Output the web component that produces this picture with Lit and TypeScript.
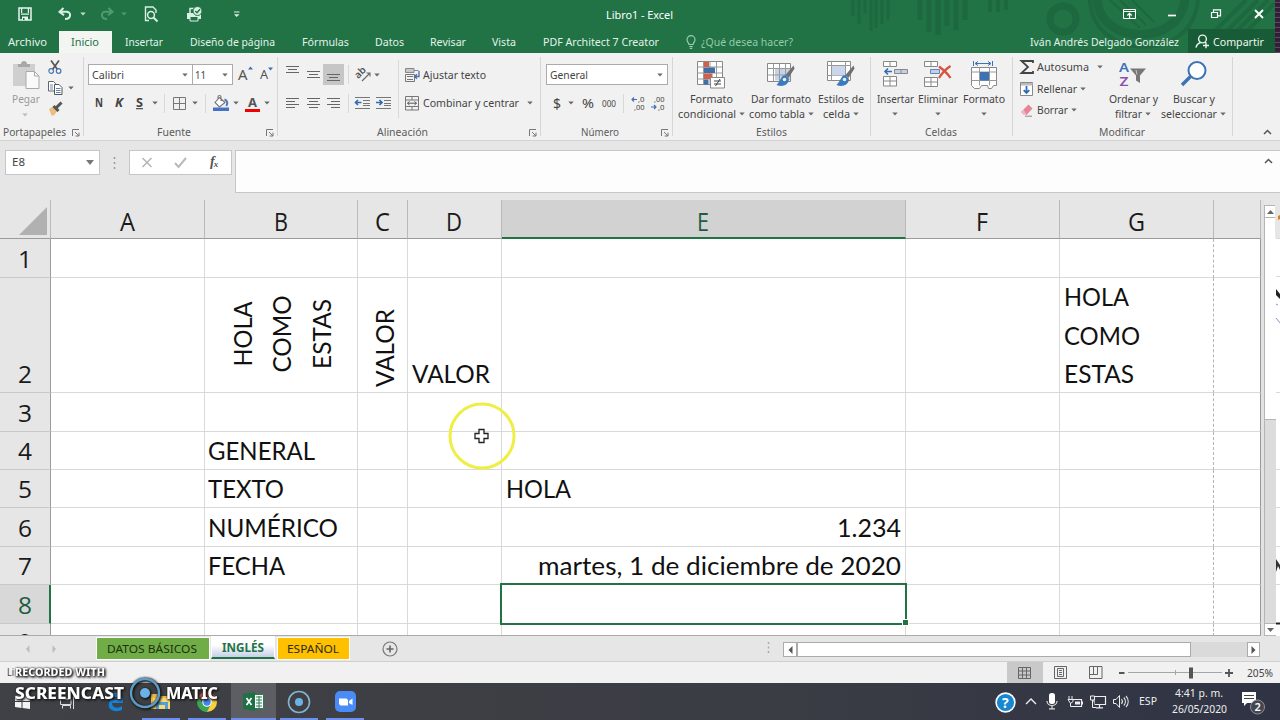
import { LitElement, html, svg, css } from "lit";
import { customElement } from "lit/decorators.js";

const UI = "'Noto Sans','Open Sans',sans-serif";
const HEAD = "'Open Sans','Noto Sans',sans-serif";
const CELL = "Lato,'Open Sans',sans-serif";

/* One line of text set to an exact advance width, caps centred vertically. */
const t = (text: string, w: number, size = 11.5, cls = "", font = UI) => {
  const h = Math.ceil(size * 1.2);
  return html`<svg class="t ${cls}" width=${w} height=${h} viewBox="0 0 ${w} ${h}">
    <text x="0" y=${h / 2 + size * 0.357} textLength=${w} lengthAdjust="spacingAndGlyphs" font-size=${size} font-family=${font}>${text}</text>
  </svg>`;
};
const c = (text: string, w: number, cls = "") => t(text, w, 24.5, "cell-text " + cls, CELL);
const ic = (w: number, h: number, body: unknown, cls = "") =>
  html`<svg class="ic ${cls}" width=${w} height=${h} viewBox="0 0 ${w} ${h}" fill="none">${body}</svg>`;
const arr = (cls = "") => ic(6, 4, svg`<path d="M.3 .5h5.4L3 3.6z" fill="currentColor"/>`, "arr " + cls);
const sep = (cls = "") => html`<i class="sep ${cls}"></i>`;
const lines = (rows: number[][], h: number) =>
  ic(14, h, svg`${rows.map(([y, a, b]) => svg`<path d="M${a} ${y + 0.5}H${b}" stroke="#666"/>`)}`);

const launcher = ic(8, 8, svg`<path d="M.5 7V.5H7M3 3l4 4M7 3.6V7H3.6" stroke="#777"/>`, "launch");
const save = ic(14, 14, svg`<path d="M1 1h12v12H1z" stroke="#e9f5ee" stroke-width="1.5"/><path d="M3 7.2h8M3.6 1v5M10.4 1v5" stroke="#e9f5ee" stroke-width="1.2"/><path d="M4 9.500h6V13H4z" fill="#e9f5ee"/><path d="M5 11h1.500v2H5z" fill="#217346"/>`);
const undo = ic(14, 14, svg`<path d="M5.500 1L1.500 4.800l4.500 3.500M2 4.800h6.500c5 0 5 7.200-1.500 7.200" stroke="#d9efe2" stroke-width="2"/>`);
const redo = ic(14, 14, svg`<path d="M8.500 1l4 3.800L8 8.300M12 4.800H5.500c-5 0-5 7.200 1.500 7.200" stroke="#4f9a72" stroke-width="2"/>`);
const preview = ic(14, 16, svg`<path d="M5 14.500H1.500V1H9l3 3v3" stroke="#d9efe2" stroke-width="1.4"/><circle cx="7" cy="9" r="3.400" stroke="#d9efe2" stroke-width="1.500"/><path d="M9.500 11.500l4 4" stroke="#d9efe2" stroke-width="2"/>`);
const printer = ic(17, 16, svg`<path d="M1 7h14v6H1z" fill="#d9efe2"/><path d="M4 7V2.500h5" stroke="#d9efe2" stroke-width="1.500"/><path d="M4 10.500h8v4.500H4z" fill="#217346" stroke="#d9efe2"/><circle cx="11.500" cy="5" r="4.500" fill="#d9efe2" stroke="#217346"/><path d="M9.300 5l1.700 1.800 3-3.600" stroke="#217346" stroke-width="1.400"/>`);
const custom = ic(8, 7, svg`<path d="M1 1h5.500" stroke="#e0f0e6"/><path d="M1 3.300h5.500L3.700 6z" fill="#e0f0e6"/>`);
const bulb = ic(10, 14, svg`<path d="M3 9.500C3 8 1 7 1 4.700a4 4 0 018 0C9 7 7 8 7 9.500zM3.200 11.500h3.600M3.800 13.300h2.400" stroke="#9bccb0" stroke-width="1.200"/>`);
const person = ic(15, 15, svg`<circle cx="7.500" cy="5" r="3.900" stroke="#e9f5ee" stroke-width="1.400"/><path d="M5.500 8.500C3 9.500 1.500 11 1 13.600M10 8l1 1M8 11.500h6M11 8.700v5.600" stroke="#e9f5ee" stroke-width="1.400"/>`);

const paste = ic(30, 29, svg`<path d="M1 4h22v22H1z" fill="#cfcfcf"/><path d="M6 4h3c0-4 6-4 6 0h3v3H6z" fill="#a8a8a8"/><path d="M14 11.500h8.500l4.500 4.500v12.500H14z" fill="#fafafa" stroke="#a9a9a9"/><path d="M22.500 11.500V16H27" stroke="#a9a9a9"/>`);
const cut = ic(14, 14, svg`<path d="M3 .5l6.500 9M11 .5l-6.500 9" stroke="#555" stroke-width="1.700"/><circle cx="3.200" cy="11" r="2.300" stroke="#4a77b4" stroke-width="1.200"/><circle cx="10.600" cy="11" r="2.300" stroke="#4a77b4" stroke-width="1.200"/>`);
const copy = ic(15, 14, svg`<path d="M.5 .5h5l2 2V10h-7z" fill="#fff" stroke="#666"/><path d="M2 4h3M2 6h3M2 8h3" stroke="#6b8fc4"/><path d="M6.500 3.500H11l3 3v7H6.500z" fill="#fff" stroke="#555"/><path d="M8 7.500h4.500M8 9.500h4.500M8 11.500h4.500" stroke="#5a83bd"/>`);
const brush = ic(15, 15, svg`<path d="M1 8l5-3 4 4-4 5.500H3.500z" fill="#eabf7d"/><path d="M5.500 5l5 5M7.800 7.200L13.500 1.500" stroke="#555" stroke-width="3"/>`);

const growA = (s: number, up: boolean) =>
  html`<span class="glyph-a">${t("A", s * 0.68, s, "gray", UI)}${ic(5, 4, up ? svg`<path d="M0 3.500L2.500 .5 5 3.500z" fill="#3e6db5"/>` : svg`<path d="M0 .5L2.500 3.500 5 .5z" fill="#3e6db5"/>`)}</span>`;
const borders = ic(13, 13, svg`<path d="M.5 .5h12v12H.5zM6.500 .5v12M.5 6.500h12" stroke="#777"/>`);
const bucket = ic(16, 16, svg`<path d="M6.500 2.500l5.500 5-5.500 4.500-4.500-4.500zM5 4.500V2c0-2 3-2 3 0v4" fill="#fff" stroke="#777" stroke-width="1.100"/><path d="M11.500 4.500c3 .8 3.500 4 1.800 6.500" stroke="#4a77b4" stroke-width="2"/><path d="M0 12.500h16V16H0z" fill="#4472c4"/>`);
const fontColor = html`<span class="font-color">${t("A", 9, 13, "gray bold", UI)}<i></i></span>`;
const orient = ic(15, 15, svg`<text x="0" y="9" font-size="10" font-weight="600" fill="#555" font-family=${UI} transform="rotate(-45 5 8)">ab</text><path d="M6 14l8-8M10.500 6H14v3.500" stroke="#666" stroke-width="1.100"/>`);
const wrap = ic(15, 16, svg`<path d="M.5 1.500h8.500v4H.5z" fill="#c8c8c8" stroke="#888"/><path d="M9 3.500h4.500" stroke="#888"/><path d="M.5 7.500h9v7h-9zM2 9.500h6M2 12.500h6" stroke="#777"/><path d="M14 4v5.500h-4M12 7.200L9.500 9.500l2.500 2.300" stroke="#4a6fb0" stroke-width="1.300"/>`);
const merge = ic(14, 15, svg`<path d="M.5 .5h13v13.500H.5zM.5 4h13M.5 10.500h13M7 .5V4M7 10.500V14" stroke="#777"/><path d="M2.500 7.200h9M4.500 5.500L2.500 7.200l2 1.800M9.500 5.500l2 1.700-2 1.800" stroke="#555"/>`);
const indent = (right: boolean) =>
  ic(15, 12, svg`<path d="M0 .5h15M8 3.500h7M8 6.500h7M8 8.500h7M0 11.500h15" stroke="#777"/><path d=${right ? "M0 5.500h6M3.500 3L6 5.500 3.500 8" : "M6.500 5.500h-6M3 3L.5 5.500 3 8"} stroke="#2f6db3" stroke-width="1.700"/>`);
const decimals = (inc: boolean) =>
  ic(14, 15, svg`<text x=${inc ? 7 : 3} y="6" font-size="7.500" fill="#444" font-family=${UI} textLength=${inc ? 6.5 : 10.5} lengthAdjust="spacingAndGlyphs">${inc ? ",0" : ",00"}</text><text x=${inc ? 3 : 7} y="14.300" font-size="7.500" fill="#444" font-family=${UI} textLength=${inc ? 10.5 : 6.5} lengthAdjust="spacingAndGlyphs">${inc ? ",00" : ",0"}</text><path d=${inc ? "M6 3.500H1M3 1.500l-2 2 2 2" : "M0 11h5M3 9l2 2-2 2"} stroke="#3f6fb5" stroke-width="1.200"/>`);

const condFmt = ic(30, 28, svg`<path d="M1.500 .5h25v23h-25z" fill="#fff" stroke="#888"/><path d="M7.500 .5v23M20.500 .5v23M1.500 6h25M1.500 12h25M1.500 18h25M14 .5v23" stroke="#999"/><path d="M8 1h5v5H8zM8 12.500h8.500V18H8z" fill="#d0604a"/><path d="M8 6.500h11V12H8zM8 18.500h4.500v5H8z" fill="#3f6fa8"/><path d="M14.500 16.500h14v10.500h-14z" fill="#fff" stroke="#888"/><path d="M18 20h7M18 23h7M24 18l-4.500 7" stroke="#444"/>`);
const brushShape = svg`<path d="M27.500 4.500l-8 9.500 3 3 6-9.500z" fill="#707070"/><path d="M20 14.500c-5-1-4 4-9.500 9.500 5 2 12 1 12.500-6z" fill="#3b7bbd"/><circle cx="18.500" cy="18.500" r="1.800" fill="#e7f0f8"/>`;
const tableFmt = ic(30, 28, svg`<path d="M1.500 2.500h23v18h-23z" fill="#fff" stroke="#888"/><path d="M9 7.500h15v12H9z" fill="#c6d2e6"/><path d="M7.500 2.500v18M13.500 2.500v18M19.500 2.500v18M1.500 7.500h23M1.500 14h23" stroke="#999"/>${brushShape}`);
const cellSty = ic(30, 28, svg`<path d="M1.500 .5h23v19h-23z" fill="#fff" stroke="#888"/><path d="M5.500 .5v19M19.500 .5v19M1.500 4.500h23M1.500 14.500h23" stroke="#999"/><path d="M6 5h13v9.500H6z" fill="#cbd6ea"/>${brushShape}`);
const insertIc = ic(28, 28, svg`<path d="M2.500 .5h13v5h-13zM9 .5v5M2.500 15.500h13v9.500h-13zM9 15.500V25M2.500 20h13" fill="#fff" stroke="#888"/><path d="M13.500 8.500h13v4h-13zM20 8.500v4" fill="#c3d0e6" stroke="#888"/><path d="M11 10.500H4M7 7.500l-3 3 3 3" stroke="#2f6db3" stroke-width="1.600"/>`);
const deleteIc = ic(30, 28, svg`<path d="M1.500 .5h13v5h-13zM8 .5v5M1.500 16.500h13v9h-13zM8 16.500v9M1.500 21h13" fill="#fff" stroke="#888"/><path d="M7.500 8.500h9v4h-9z" fill="#c3d0e6" stroke="#5f86ba"/><path d="M16 5.500c4 3 8 6 11.500 11.500M27.500 5C23 8 19 12 16 17" stroke="#d8523d" stroke-width="2.200"/>`);
const formatIc = ic(28, 30, svg`<path d="M1.500 6.500h25v18h-3l-2 3h-3l-1-3h-6l-2 3h-5l-3-3z" fill="#fff" stroke="#888"/><path d="M9.500 6.500v18M19.500 6.500v18M1.500 11h25M1.500 19.500h25" stroke="#999"/><path d="M10 11h9v8.500h-9z" fill="#3b73b5"/><path d="M3.500 0v5M22.500 0v5M6 2.500h14M8 .5l-3 2 3 2M18 .5l3 2-3 2" stroke="#3b73b5"/>`);
const sortIc = ic(30, 28, svg`<text x="1" y="10.500" font-size="13" font-weight="600" fill="#3b73b5" font-family=${UI} textLength="10" lengthAdjust="spacingAndGlyphs">A</text><text x="1.500" y="24.500" font-size="13" font-weight="600" fill="#8a4db0" font-family=${UI} textLength="9" lengthAdjust="spacingAndGlyphs">Z</text><path d="M12 7.500h16l-6 7V22l-4-2.500v-5z" fill="#777"/><path d="M18 9l1 4.500" stroke="#ccc"/>`);
const findIc = ic(28, 28, svg`<circle cx="17" cy="9.500" r="8.500" fill="#fff" stroke="#3b73b5" stroke-width="2"/><path d="M10.500 15.500L2 24" stroke="#3b73b5" stroke-width="3.400"/>`);
const sigma = ic(14, 14, svg`<path d="M13 3V1H1.500L8 7l-6.500 6H13v-2" stroke="#444" stroke-width="1.800"/>`);
const fill = ic(14, 14, svg`<path d="M.5 .5h12v13H.5z" fill="#fff" stroke="#888"/><path d="M1 1h11.500v2.500H1z" fill="#bbb"/><path d="M6.500 4v7M3.700 8.200L6.500 11l2.800-2.800" stroke="#2f6db3" stroke-width="1.800"/>`);
const erase = ic(14, 13, svg`<path d="M8.500 .5l4 4-6 6.500H4L1 8z" fill="#e8849a"/><path d="M1 8l3 3 2.500 0L3.500 5.500z" fill="#f4b7c3"/><path d="M5 12.200h7" stroke="#888"/>`);

const big = (icon: unknown, l1: unknown, l2: unknown, cls = "") =>
  html`<div class="big ${cls}"><div class="big-ic">${icon}</div><div class="l1">${l1}</div><div class="l2">${l2}</div></div>`;

const ROWS: Record<string, unknown>[] = [
  {},
  {
    B: html`<div class="vert">${[["HOLA", 65], ["COMO", 77], ["ESTAS", 70]].map(([s, w]) => html`<span>${c(s as string, w as number, "rot")}</span>`)}</div>`,
    C: html`<div class="vert low"><span>${c("VALOR", 78, "rot")}</span></div>`,
    D: c("VALOR", 78),
    G: html`<div class="stack">${c("HOLA", 65)}${c("COMO", 76)}${c("ESTAS", 70)}</div>`,
  },
  {},
  { B: c("GENERAL", 107) },
  { B: c("TEXTO", 76), E: c("HOLA", 65) },
  { B: c("NUMÉRICO", 130), E: c("1.234", 64, "right") },
  { B: c("FECHA", 77), E: c("martes, 1 de diciembre de 2020", 363, "right") },
  { E: html`<div class="select"><i></i></div>` },
  {},
];

@customElement("app-root")
export class AppRoot extends LitElement {
  static styles = css`
    :host { display: block; width: 1280px; height: 720px; overflow: hidden; position: relative; background: #e6e6e6; color: #444; font-family: "Noto Sans", sans-serif; }
    * { box-sizing: border-box; }
    svg { display: block; overflow: visible; flex: none; }
    .t text { fill: currentColor; }
    .bold text { font-weight: 700; }
    .ital text { font-style: italic; }
    .under text { text-decoration: underline; }
    .arr { color: #6a6a6a; }
    .gray { color: #555; }
    .row { display: grid; align-items: center; justify-items: start; }
    .sep { display: block; width: 1px; height: 19px; background: #d8d8d8; }
    .sep.tall { height: 29px; margin: -4px 0; }

    .head { height: 53px; display: grid; grid-template-columns: 1275px 5px; background: #217346; color: #fff; }
    .head > * { grid-row: 1; }
    .head .decor { grid-column: 1; overflow: hidden; }
    .bars { grid-column: 1; display: flex; flex-direction: column; z-index: 1; }
    .title { height: 29px; display: grid; grid-template-columns: 605.500px 517.500px 152px; align-items: center; }
    .quick { padding-left: 18px; grid-template-columns: 40px 22px 20px 21px 23px 42px 47px 10px; margin-top: -1px; }
    .quick .arr { color: #bfe0cc; }
    .quick .off { color: #4f9a72; }
    .wins { grid-template-columns: 44px 43px 43px 20px; margin-top: -1px; }
    .tabs { height: 24px; padding-left: 8px; grid-template-columns: 51px 66px 65px 112px 73px 55px 62px 51px 143px 15px 329px 158px 87px; color: #e4f2ea; }
    .tabs > .t, .tabs > .ic { margin-top: 1px; }
    .tab-on { width: 53px; height: 22px; align-self: end; background: #f3f5f3; color: #217346; display: flex; align-items: center; justify-content: center; padding-right: 2px; }
    .ask { color: #97c8ac; }
    .share { width: 87px; height: 24px; align-self: start; background: #185c37; display: flex; align-items: center; gap: 3px; padding: 1px 0 0 7px; color: #f0f8f3; }
    .edge { grid-column: 2; background: repeating-linear-gradient(#3d1d3a 0 2px, #5d4766 2px 3px, #2a2232 3px 5px); }

    .ribbon { height: 88px; display: flex; background: #f1f1f1; border-bottom: 1px solid #d2d2d2; }
    .group { display: flex; flex-direction: column; position: relative; }
    .group::after { content: ""; position: absolute; right: 0; top: 4px; height: 79px; width: 1px; background: #d6d6d6; }
    .group:last-child::after { display: none; }
    .body { height: 71px; }
    .name { height: 15px; display: grid; grid-template-columns: 1fr; align-items: center; justify-items: center; color: #5c5c5c; }
    .name > * { grid-area: 1 / 1; }
    .g5 .name, .g6 .name, .g7 .name { padding-right: 2px; }
    .with-launch .t { margin-right: 15px; }
    .launch { justify-self: end; margin-right: 4px; margin-top: 3px; }
    .g1 { width: 84px; } .g2 { width: 194px; } .g3 { width: 263px; } .g4 { width: 132px; } .g5 { width: 198px; } .g6 { width: 142px; } .g7 { width: 220px; } .g8 { width: 47px; }
    .clip { display: grid; grid-template-columns: 48px 36px; }
    .paste { display: flex; flex-direction: column; padding: 7px 0 0 12px; color: #9a9a9a; }
    .paste .arr { color: #bbb; margin: 7px 0 0 10px; }
    .paste .t { margin-top: 3px; }
    .tools { display: grid; grid-template-rows: 21px 21px 21px; padding-top: 3px; align-items: center; }
    .tools > div { display: flex; align-items: center; gap: 5px; }
    .two { display: grid; grid-template-rows: 21px 22px; row-gap: 7px; padding-top: 11px; align-content: start; }
    .f1 { padding-left: 4px; grid-template-columns: 104px 46px 22px 18px; }
    .f2 { padding-left: 11px; grid-template-columns: 20px 21px 16px 12px 9px 19px 13px 8px 20px 12px 19px 6px; }
    .combo { height: 21px; background: #fff; border: 1px solid #ababab; display: flex; align-items: center; justify-content: space-between; padding: 0 4px 0 3px; }
    .c-font { width: 105px; } .c-size { width: 41px; } .c-num { width: 122px; margin-left: 5px; }
    .c-size { padding-left: 2px; }
    .glyph-a { display: flex; align-items: flex-start; }
    .font-color { display: flex; flex-direction: column; align-items: center; width: 15px; }
    .font-color .t { margin-bottom: -1px; }
    .font-color i { width: 15px; height: 3px; background: #f00000; }
    .a1 { padding-left: 8px; grid-template-columns: 21px 20px 21px 8px 18px 24px 7px 18px 70px; }
    .a2 { padding-left: 8px; grid-template-columns: 21px 20px 21px 7px 21px 22px 7px 18px 104px 6px; }
    .pressed { width: 21px; height: 21px; background: #c6c6c6; display: flex; align-items: flex-end; padding: 0 0 3px 4px; margin-left: -4px; }
    .up { align-self: start; margin-top: 2px; }
    .n2 { padding-left: 12px; grid-template-columns: 15px 14px 20px 21px 8px 20px 14px; }
    .bigs { display: flex; }
    .s5 { padding-left: 3px; } .s6 { padding-left: 3px; }
    .big { display: flex; flex-direction: column; align-items: center; padding-top: 8px; }
    .big-ic { height: 30.500px; }
    .l1 { height: 15px; display: flex; align-items: center; }
    .l2 { height: 14px; display: flex; align-items: center; gap: 3px; }
    .w69 { width: 70px; } .w70 { width: 70px; } .w50 { width: 50px; } .w42 { width: 42px; } .w44 { width: 44px; } .w46 { width: 47px; } .w58 { width: 58px; } .w62 { width: 63px; }
    .edit { width: 91px; padding: 3px 0 0 7px; display: grid; grid-template-rows: 22px 21.500px 21px; align-content: start; }
    .edit > div { display: flex; align-items: center; gap: 3px; }
    .edit .far { margin-left: 5px; }
    .fold { margin: 0 0 0 21px; }

    .formula { height: 59px; display: grid; grid-template-columns: 114px 15px 106px 1045px; align-items: start; padding-top: 9px; }
    .namebox { margin-left: 5px; width: 95px; height: 25px; border: 1px solid #c6c6c6; background: #fff; display: flex; align-items: center; justify-content: space-between; padding: 0 5px 1px 6px; }
    .dots { margin-top: 7px; }
    .fx { width: 103px; height: 25px; border: 1px solid #c6c6c6; background: #fff; grid-template-columns: 33px 34px 20px; padding: 0 0 1px 11px; }
    .input { height: 43px; border: 1px solid #c6c6c6; border-right: 0; background: #fdfdfd; display: flex; justify-content: flex-end; padding: 7px 7px 0 0; }

    .work { height: 436px; display: grid; grid-template-columns: 1261px 3px 12px 4px; }
    .sheet { display: grid; grid-template-columns: 51px 154px 153px 50px 94px 404px 154px 154px 47px; grid-template-rows: 39px 39px 115px 39px 38px 38px 39px 38px 39px 12px; overflow: hidden; border-bottom: 1px solid #ababab; }
    .ch, .rh { display: flex; align-items: center; justify-content: center; background: #e6e6e6; color: #1a1a1a; }
    .ch { border-right: 1px solid #b9b9b9; border-bottom: 1px solid #9b9b9b; padding: 6px 1px 0 0; }
    .rh { border-right: 1px solid #9b9b9b; border-bottom: 1px solid #c9c9c9; align-items: flex-end; overflow: hidden; padding-bottom: 3px; }
    .rh.tip { align-items: flex-start; padding: 3px 0 0; border-bottom: 0; }
    .ch.on { background: #d2d2d2; color: #215c41; border-bottom: 2px solid #217346; }
    .rh.on { background: #d8d8d8; color: #215c41; border-right: 2px solid #217346; }
    .corner { justify-content: flex-end; align-items: flex-end; padding: 0 3px 3px 0; }
    .cell { background: #fff; border-right: 1px solid #d9d9d9; border-bottom: 1px solid #d9d9d9; display: flex; align-items: flex-end; position: relative; padding: 0 4px 2.750px 3px; color: #111; }
    .cell.E { justify-content: flex-end; }
    .cell.E .cell-text:not(.right) { margin-right: auto; }
    .cell.G { border-right: 1px dashed #b5b5b5; padding-left: 3.500px; }
    .cell.D, .cell.E { padding-left: 3.500px; }
    .cell.H { border-right-color: #999; }
    .stack { display: grid; grid-auto-rows: 38.500px; align-items: end; }
    .vert { display: flex; width: 100%; height: 100%; justify-content: center; align-items: center; padding-left: 4px; }
    .vert span { width: 39px; display: flex; justify-content: center; align-items: center; }
    .vert.low { align-items: flex-end; padding: 0 0 26px 5px; }
    .rot { transform: rotate(-90deg); }
    .select { position: absolute; inset: -2px -2px -2px -2px; border: 2px solid #217346; z-index: 2; }
    .select i { position: absolute; right: -4px; bottom: -3px; width: 7px; height: 7px; background: #217346; border: 1px solid #fff; }
    .cell.sel { z-index: 2; }
    .gutter { background: #e2e2e2; }
    .vs { display: flex; flex-direction: column; background: #dcdcdc; border-left: 1px solid #b5b5b5; margin-top: 5px; }
    .vs .btn { height: 13px; background: #fff; border: solid #b5b5b5; border-width: 1px 0; display: flex; align-items: center; justify-content: center; }
    .vs .thumb { height: 202px; background: #fff; border-bottom: 1px solid #b5b5b5; }
    .vs .track { flex: 1; }
    .sliver { background: #fff; padding-top: 12px; }

    .sheettabs { height: 26px; display: grid; grid-template-columns: 96px 115px 66px 105px 383px 18px 477px 20px; background: #e6e6e6; border-bottom: 1px solid #cfcfcf; align-items: start; }
    .nav { display: flex; gap: 22px; padding: 9px 0 0 25px; }
    .tab { margin-top: 1px; height: 23px; display: flex; align-items: center; justify-content: center; color: #2b2b1c; border: 1px solid #fff; padding-right: 2px; }
    .green { width: 114px; background: #70ad47; color: #1d3010; }
    .white { width: 64px; margin-top: 0; background: linear-gradient(#fff 40%, #c5cfe6); color: #217346; border-bottom: 2px solid #217346; padding: 2px 0 0; }
    .yellow { width: 73px; background: #ffc000; }
    .plus { margin-top: 5px; }
    .hs { margin-top: 6px; height: 15px; display: grid; grid-template-columns: 14px 394px 56px 13px; background: #dadada; }
    .hs > * { background: #fff; border: 1px solid #ababab; display: flex; align-items: center; justify-content: center; }
    .hs .gap { background: none; border: 0; }

    .status { height: 21px; background: #f1f1f1; display: grid; grid-template-columns: 1007px 47px 35px 29px 129px 33px; align-items: center; padding-bottom: 1px; }
    .status .mode { margin-left: 7px; }
    .view-on { width: 36px; height: 21px; background: #c9c9c9; display: flex; align-items: center; justify-content: center; padding-right: 1px; }
    .task { height: 37px; background: linear-gradient(90deg, #3f4146, #3b3d44 60%, #2f3344); display: grid; grid-template-columns: 995px 285px; color: #eee; }
    .apps { display: grid; grid-template-columns: 44px 48px 46px 46px 46px 46px 46px 46px; height: 37px; }
    .app { display: flex; align-items: center; justify-content: center; border-bottom: 2px solid transparent; padding-top: 2px; }
    .run { border-bottom-color: #6f8fee; margin: 0 4px; }
    .run.act { background: #5d5e63; margin: 0 0 0 1px; }
    .tray { grid-template-columns: 31px 20px 22px 22px 23px 26px 32px 71px 30px; height: 37px; }
    .clock { display: flex; flex-direction: column; align-items: center; gap: 2px; width: 56px; margin-top: -2px; }
    .lang { margin-top: -2px; }

    .mark { position: absolute; left: 15px; top: 665px; color: #fff; filter: drop-shadow(1px 1px 1px #111) drop-shadow(0 0 1px #222); z-index: 5; }
    .mark .brand { display: flex; align-items: center; gap: 7px; margin-top: -1px; }
    .mark .t text { font-weight: 800; }
    .cursor { position: absolute; left: 448px; top: 402px; z-index: 5; }
  `;

  private group(n: number, label: string, w: number, body: unknown, cls = "", launch = false) {
    return html`<section class="group g${n}"><div class="body ${cls}">${body}</div>
      <div class="name ${launch ? "with-launch" : ""}">${t(label, w, 11)}${launch ? launcher : ""}</div></section>`;
  }

  private header() {
    const tabs: [string, number][] = [["Insertar", 38], ["Diseño de página", 85], ["Fórmulas", 47], ["Datos", 29], ["Revisar", 36], ["Vista", 24], ["PDF Architect 7 Creator", 116]];
    return html`<header class="head">
      <svg class="decor" width="1275" height="53" viewBox="0 0 1275 53" fill="none">
        <g stroke="#1d683e">
          <path d="M853 0v16M859 0v24M865 0v14M871 0v31M876 0v28M882 0v24M888 0v20" stroke-width="3"/>
          <path d="M920 0v20M929 0v32M938 0v35M947 0v26M956 0v30M965 0v20" stroke-width="5"/>
          <path d="M990 0v12M998 0v12M1006 0v10" stroke-width="4"/>
          <circle cx="1063" cy="19" r="13" stroke-width="7"/>
          <path d="M1090 0c2 60 102 65 108 0M1220 38l38-38M1230 38l38-38M1240 38l35-35M1212 34l34-34" stroke-width="4"/>
          <path d="M1097 0c4 46 82 46 88 0" stroke-width="9"/>
          <path d="M1110 0l30 28M1120 0l26 25M1132 0l22 22" stroke-width="2"/>
        </g>
      </svg>
      <div class="bars">
        <div class="title">
          <div class="row quick">${save}${undo}${arr()}${redo}${arr("off")}${preview}${printer}${custom}</div>
          ${t("Libro1 - Excel", 67, 11.5)}
          <div class="row wins">
            ${ic(13, 10, svg`<path d="M.5 .5h12v9H.5zM.5 2.500h12" stroke="#fff"/><path d="M6.500 9V4.500M4.300 6.500l2.200-2.200 2.200 2.200" stroke="#fff" stroke-width="1.200"/>`)}
            ${ic(10, 4, svg`<path d="M1 3.500h8" stroke="#fff" stroke-width="1.700"/>`)}
            ${ic(10, 10, svg`<path d="M1.500 3.500h6v5h-6zM3.500 3V.8h7v6H8" stroke="#fff" stroke-width="1.200"/>`)}
            ${ic(11, 10, svg`<path d="M2 1l8 8M10 1l-8 8" stroke="#fff" stroke-width="1.900"/>`)}
          </div>
        </div>
        <nav class="row tabs">
          ${t("Archivo", 39)}<div class="tab-on">${t("Inicio", 28)}</div>
          ${tabs.map(([s, w]) => t(s, w))}
          ${bulb}${t("¿Qué desea hacer?", 92, 11.5, "ask")}${t("Iván Andrés Delgado González", 149)}
          <div class="share">${person}${t("Compartir", 51)}</div>
        </nav>
      </div>
      <div class="edge"></div>
    </header>`;
  }

  private ribbon() {
    return html`<div class="ribbon">
      ${this.group(1, "Portapapeles", 63, html`
        <div class="paste">${paste}${t("Pegar", 28)}${arr()}</div>
        <div class="tools"><div>${cut}</div><div>${copy}${arr()}</div><div>${brush}</div></div>`, "clip", true)}
      ${this.group(2, "Fuente", 34, html`
        <div class="row f1"><div class="combo c-font">${t("Calibri", 32)}${arr()}</div><div class="combo c-size">${t("11", 11)}${arr()}</div>${growA(14, true)}${growA(12, false)}</div>
        <div class="row f2">${t("N", 8, 11.5, "bold")}${t("K", 8, 11.5, "bold ital")}${t("S", 7, 11.5, "bold under")}${arr()}${sep()}${borders}${arr()}${sep()}${bucket}${arr()}${fontColor}${arr()}</div>`, "two", true)}
      ${this.group(3, "Alineación", 51, html`
        <div class="row a1"><div class="up">${lines([[0, 0, 13], [3, 2, 11], [6, 0, 13]], 8)}</div>${lines([[0, 0, 13], [3, 2, 11], [6, 0, 13]], 8)}<div class="pressed">${lines([[0, 0, 13], [3, 2, 11], [6, 0, 13]], 8)}</div>${sep()}${orient}${arr()}${sep("tall")}${wrap}${t("Ajustar texto", 63)}</div>
        <div class="row a2">${lines([[0, 0, 13], [3, 0, 9], [6, 0, 13], [9, 0, 9]], 10)}${lines([[0, 0, 13], [3, 2, 11], [6, 0, 13], [9, 2, 11]], 10)}${lines([[0, 0, 13], [3, 4, 13], [6, 0, 13], [9, 4, 13]], 10)}${sep()}${indent(false)}${indent(true)}${sep("tall")}${merge}${t("Combinar y centrar", 96)}${arr()}</div>`, "two", true)}
      ${this.group(4, "Número", 38, html`
        <div class="combo c-num">${t("General", 38)}${arr()}</div>
        <div class="row n2">${t("$", 8, 14)}${arr()}${t("%", 12, 13)}${t("000", 14, 9)}${sep()}${decimals(true)}${decimals(false)}</div>`, "two", true)}
      ${this.group(5, "Estilos", 31, html`
        ${big(condFmt, t("Formato", 43), html`${t("condicional", 58)}${arr()}`, "w69")}
        ${big(tableFmt, t("Dar formato", 60), html`${t("como tabla", 56)}${arr()}`, "w70")}
        ${big(cellSty, t("Estilos de", 46), html`${t("celda", 27)}${arr()}`, "w50")}`, "bigs s5")}
      ${this.group(6, "Celdas", 32, html`
        ${big(insertIc, t("Insertar", 37), arr(), "w42")}${big(deleteIc, t("Eliminar", 40), arr(), "w44")}${big(formatIc, t("Formato", 42), arr(), "w46")}`, "bigs s6")}
      ${this.group(7, "Modificar", 46, html`
        <div class="edit"><div>${sigma}${t("Autosuma", 52)}${arr("far")}</div><div>${fill}${t("Rellenar", 40)}${arr()}</div><div>${erase}${t("Borrar", 31)}${arr()}</div></div>
        ${big(sortIc, t("Ordenar y", 49), html`${t("filtrar", 27)}${arr()}`, "w58")}
        ${big(findIc, t("Buscar y", 42), html`${t("seleccionar", 56)}${arr()}`, "w62")}`, "bigs")}
      <section class="group g8"><div class="body"></div><div class="name">${ic(9, 6, svg`<path d="M1 5l3.500-3.500L8 5" stroke="#555" stroke-width="1.500"/>`, "fold")}</div></section>
    </div>`;
  }

  private formula() {
    return html`<div class="formula">
      <div class="namebox">${t("E8", 13)}${ic(8, 5, svg`<path d="M0 0h8L4 5z" fill="#777"/>`)}</div>
      ${ic(3, 12, svg`<path d="M.5 0v12" stroke="#999" stroke-dasharray="2 3" stroke-width="1.500"/>`, "dots")}
      <div class="row fx">
        ${ic(12, 11, svg`<path d="M1.500 1l9 9M10.500 1l-9 9" stroke="#b5b5b5" stroke-width="1.500"/>`)}
        ${ic(13, 11, svg`<path d="M1 6l3.500 4L12 1" stroke="#b9b9b9" stroke-width="2"/>`)}
        ${ic(12, 14, svg`<text x="2" y="11" font-size="14" font-style="italic" font-weight="700" font-family="'Liberation Serif',serif" fill="#555">f<tspan font-size="9" dx="-1" dy="1">x</tspan></text>`)}
      </div>
      <div class="input">${ic(9, 6, svg`<path d="M1 5l3.500-3.500L8 5" stroke="#555" stroke-width="1.500"/>`)}</div>
    </div>`;
  }

  private sheet() {
    const cols: [string, number][] = [["A", 15], ["B", 14], ["C", 15], ["D", 16], ["E", 12], ["F", 12], ["G", 17], ["H", 0]];
    return html`<div class="work"><div class="sheet">
      <div class="ch corner">${ic(28, 28, svg`<path d="M28 0v28H0z" fill="#b1b1b1"/>`)}</div>
      ${cols.map(([l, w]) => html`<div class="ch ${l === "E" ? "on" : ""}">${w ? t(l, w, 25, "", HEAD) : ""}</div>`)}
      ${ROWS.map((r, i) => html`<div class="rh ${i === 7 ? "on" : i === 8 ? "tip" : ""}">${t(String(i + 1), 14, 24.5, "", HEAD)}</div>
        ${cols.map(([l]) => html`<div class="cell ${l} ${i === 7 && l === "E" ? "sel" : ""}">${r[l] ?? ""}</div>`)}`)}
    </div>
    <div class="gutter"></div>
    <div class="vs"><div class="btn">${ic(7, 4, svg`<path d="M0 4L3.500 0 7 4z" fill="#666"/>`)}</div><div class="thumb"></div><div class="track"></div><div class="btn">${ic(7, 4, svg`<path d="M0 0h7L3.500 4z" fill="#666"/>`)}</div></div>
    <div class="sliver">${ic(4, 420, svg`<path d="M-1 -12h5v38h-5z" fill="#e6e6e6"/><path d="M2 4l2-1v4l-2 1z" fill="#d78220"/><path d="M0 26.500h4M0 64.500h4M0 180.500h4M0 257.500h4M0 295.500h4M0 334.500h4M0 372.500h4" stroke="#d9d9d9"/><path d="M0 77l4 5v5l-4-4z" fill="#222"/><path d="M0 92l2 1M0 106l4 5" stroke="#7d99c5"/><path d="M0 347l4 6v5l-2-4-2 6z" fill="#333"/><path d="M0 411.500h4" stroke="#222" stroke-width="2"/>`)}</div>
    </div>`;
  }

  private sheetTabs() {
    return html`<div class="sheettabs">
      <div class="nav">${ic(5, 8, svg`<path d="M4.500 0L1 4l3.500 4z" fill="#bdbdbd"/>`)}${ic(5, 8, svg`<path d="M.5 0L4 4 .5 8z" fill="#bdbdbd"/>`)}</div>
      <div class="tab green">${t("DATOS BÁSICOS", 90)}</div>
      <div class="tab white">${t("INGLÉS", 42, 11.5, "bold")}</div>
      <div class="tab yellow">${t("ESPAÑOL", 52)}</div>
      ${ic(16, 16, svg`<circle cx="8" cy="8" r="7" stroke="#777" stroke-width="1.200"/><path d="M4.500 8h7M8 4.500v7" stroke="#666" stroke-width="1.600"/>`, "plus")}
      ${ic(8, 12, svg`<path d="M3.500 1v11" stroke="#aaa" stroke-dasharray="2 2.500" stroke-width="1.500"/>`, "plus")}
      <div class="hs"><div>${ic(5, 8, svg`<path d="M4.500 0L.5 4l4 4z" fill="#555"/>`)}</div><div></div><div class="gap"></div><div>${ic(5, 8, svg`<path d="M.5 0l4 4-4 4z" fill="#555"/>`)}</div></div>
    </div>`;
  }

  private statusBar() {
    return html`<div class="status">
      <div class="mode">${t("Li", 7, 10.5)}</div>
      <div class="view-on">${ic(13, 12, svg`<path d="M.5 .5h12v11H.5zM4.500 .5v11M8.500 .5v11M.5 4h12M.5 8h12" stroke="#666"/>`)}</div>
      ${ic(13, 13, svg`<path d="M.5 .5h12v12H.5zM3.500 2.500h6v8h-6zM5 4.500h3M5 6.500h3M5 8.500h3" stroke="#666"/>`)}
      ${ic(14, 13, svg`<path d="M.5 .5h12.500v12H.5zM.5 8.500h8v-8M4.500 .5v8" stroke="#666"/>`)}
      ${ic(115, 12, svg`<path d="M1 6h5.500M107 6h8M111 2v8" stroke="#555" stroke-width="1.800"/><path d="M10 5.500h94M57.500 3v5" stroke="#a5a5a5"/><path d="M71 .5h4v11h-4z" fill="#555"/>`)}
      ${t("205%", 26, 11)}
    </div>`;
  }

  private taskBar() {
    return html`<div class="task">
      <div class="apps">
        <div class="app">${ic(15, 15, svg`<path d="M0 2l6.500-1v6H0zM7.500 1L15 0v7H7.500zM0 8h6.500v6L0 13zM7.500 8H15v7l-7.500-1z" fill="#f4f4f4"/>`)}</div>
        <div class="app">${ic(16, 14, svg`<path d="M2.500 .5v3h8v-3M2.500 13.500v-3h8v3M.5 4.500h10.500v5H.5zM13.500 0v14" stroke="#ddd"/>`)}</div>
        <div class="app">${ic(18, 19, svg`<path d="M1 9C2 1 9-1 13 2c3 2 4 5 4 9H6c0 5 6 6 10 3v4C9 21 1 18 3 11c1-3 3-5 6-6-4 0-6 1-8 4zM6.500 8h6c0-4-6-4-6 0z" fill="#1583d8" fill-rule="evenodd"/>`)}</div>
        <div class="app run">${ic(21, 17, svg`<path d="M0 1h7l2 2h10v13H0z" fill="#eeb944"/><path d="M2 5h17v11H2z" fill="#fad874"/><path d="M5 16V9h12v7h-3v-4H8v4z" fill="#4f9fd8"/>`)}</div>
        <div class="app run">${ic(20, 20, svg`<path d="M10 10V0a10 10 0 010 20z" fill="#f8cf3d"/><path d="M1.340 5A10 10 0 0118.660 5L10 6z" fill="#e04a3b"/><path d="M1.340 5A10 10 0 0010 20l4-8-8 0z" fill="#3da552"/><circle cx="10" cy="10" r="4.800" fill="#fff"/><circle cx="10" cy="10" r="3.700" fill="#4285f4"/>`)}</div>
        <div class="app run act">${ic(21, 19, svg`<path d="M11 2.500h9.500v14H11" fill="#fff" stroke="#2a7d4f"/><path d="M13 5h6M13 8h6M13 11h6M13 14h6M16 4v12" stroke="#2a7d4f"/><path d="M0 2l12-2v19L0 17z" fill="#1e7145"/><path d="M3.500 6l5 7M8.500 6l-5 7" stroke="#fff" stroke-width="1.700"/>`)}</div>
        <div class="app run">${ic(24, 24, svg`<circle cx="12" cy="12" r="10.500" stroke="#83b3cf" stroke-width="1.600"/><circle cx="12" cy="12" r="4" fill="#6cb2e4"/>`)}</div>
        <div class="app run">${ic(21, 21, svg`<rect width="21" height="21" rx="5" fill="#4a8cf7"/><path d="M4 7.500h7.500l1.500 1.500v5.500H5.500L4 13zM14 10l3.500-2.500v6.500L14 12z" fill="#fff"/>`)}</div>
      </div>
      <div class="row tray">
        ${ic(20, 20, svg`<circle cx="10.500" cy="10.500" r="9.400" fill="#1687d0" stroke="#fff" stroke-width="1.600"/><text x="7" y="15.500" font-size="14" font-weight="700" fill="#fff" font-family=${UI}>?</text>`)}
        ${ic(11, 7, svg`<path d="M0 6l5-5 5 5" stroke="#eee" stroke-width="1.400"/>`)}
        ${ic(11, 17, svg`<rect x="3" y="0" width="6" height="11" rx="2.500" fill="#fff"/><path d="M1 8c0 6 10 6 10 0M6 13v2.500M3 15.800h6" stroke="#ddd" stroke-width="1.200"/>`)}
        ${ic(15, 12, svg`<path d="M5 3.500h8.500v7H5" stroke="#eee" stroke-width="1.200"/><path d="M7 5.500h5v3H7z" fill="#eee"/><path d="M1 0v3M4 0v3M0 3.500h5v2l-2.500 2zM2.500 7v3.500H5M14.500 5.500v3" stroke="#eee"/>`)}
        ${ic(17, 14, svg`<path d="M4 1.500h11.500v8H4zM9.500 9.500v3M6 12.800h7" stroke="#eee" stroke-width="1.200"/><path d="M.5 1h4v4h-4zM2.500 5v7.500H6" fill="#3a3d45" stroke="#eee"/>`)}
        ${ic(16, 13, svg`<path d="M.5 4.500h2.500l3.500-4v12l-3.500-4H.5z" stroke="#eee"/><path d="M8.500 4c1.200 1.500 1.200 3.500 0 5M10.800 2.500c2.200 2.300 2.200 6 0 8M13 1c3 3.200 3 8 0 11" stroke="#ddd" stroke-width="1.100"/>`)}
        <div class="lang">${t("ESP", 18, 11.5)}</div>
        <div class="clock">${t("4:41 p. m.", 48, 11.5)}${t("26/05/2020", 55, 11.5)}</div>
        ${ic(24, 23, svg`<path d="M0 2h14v11H5l-3 3v-3H0z" fill="#fff"/><path d="M2 5.500h10M2 8.500h10" stroke="#444"/><circle cx="15.500" cy="17" r="7" fill="#44474f" stroke="#8d9097"/><text x="12.500" y="21" font-size="11" font-weight="600" fill="#fff" font-family=${UI}>2</text>`)}
      </div>
    </div>`;
  }

  render() {
    return html`${this.header()}${this.ribbon()}${this.formula()}${this.sheet()}${this.sheetTabs()}${this.statusBar()}${this.taskBar()}
      <div class="mark">${t("RECORDED WITH", 90, 11)}
        <div class="brand">${t("SCREENCAST", 109, 16.5)}${ic(28, 30, svg`<circle cx="14" cy="15" r="14" stroke="#5e9cc8" stroke-width="2.400"/><circle cx="14" cy="15" r="5" fill="#6cb2e4"/>`)}${t("MATIC", 52, 16.5)}</div>
      </div>
      <svg class="cursor" width="68" height="68" fill="none"><circle cx="34" cy="34" r="32" stroke="#f0ee45" stroke-width="3"/><path d="M31 27.500h5v4h4v5h-4v4h-5v-4h-4v-5h4z" fill="#fff" stroke="#222" stroke-width="1.300"/></svg>`;
  }
}
